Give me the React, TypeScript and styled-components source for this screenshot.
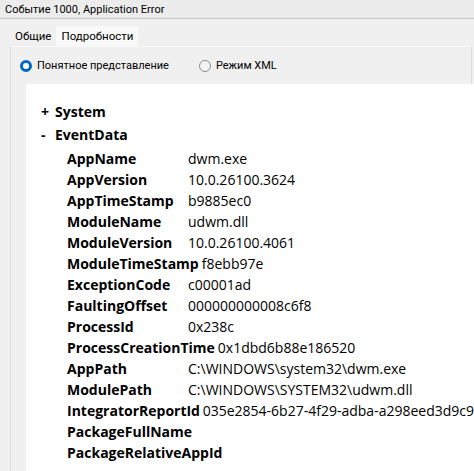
import styled, { createGlobalStyle } from "styled-components";

const GlobalStyle = createGlobalStyle`
  html, body {
    margin: 0;
    padding: 0;
    background: #f0f0f0;
    overflow: hidden;
  }
  * {
    box-sizing: border-box;
  }
`;

const Window = styled.div`
  width: 474px;
  height: 471px;
  overflow: hidden;
  display: flex;
  flex-direction: column;
  background: #f0f0f0;
  font-family: "Open Sans", "Noto Sans", sans-serif;
  color: #000;
`;

const TitleBar = styled.div`
  height: 19px;
  flex-shrink: 0;
  padding-left: 5px;
  display: flex;
  align-items: center;
  font-family: Roboto, "Open Sans", sans-serif;
  font-size: 11px;
  background: #ececec;
  border-bottom: 1px solid #c8c8c8;
  white-space: nowrap;
`;

const TabStrip = styled.div`
  height: 27px;
  flex-shrink: 0;
  display: flex;
  align-items: flex-end;
  padding-left: 10px;
`;

const Tab = styled.div<{ $active?: boolean }>`
  height: 20px;
  padding: 0 5px;
  display: flex;
  align-items: center;
  font-family: Roboto, "Open Sans", sans-serif;
  font-size: 11.5px;
  background: ${(p) => (p.$active ? "#f9f9f9" : "transparent")};
  white-space: nowrap;
`;

const Panel = styled.div`
  flex: 1;
  margin: 0 2px 0 10px;
  display: flex;
  flex-direction: column;
  border-left: 1px solid #dedede;
  border-right: 1px solid #dedede;
  border-top: 1px solid #f9f9f9;
  min-height: 0;
`;

const RadioRow = styled.div`
  height: 37px;
  flex-shrink: 0;
  display: flex;
  align-items: center;
  padding-left: 9px;
  gap: 30px;
`;

const RadioOption = styled.label`
  display: flex;
  align-items: center;
  gap: 5px;
  font-family: Roboto, "Open Sans", sans-serif;
  font-size: 11px;
  white-space: nowrap;
`;

const RadioDot = styled.span<{ $checked?: boolean }>`
  width: 12px;
  height: 12px;
  border-radius: 50%;
  flex-shrink: 0;
  background: ${(p) => (p.$checked ? "#fff" : "#f4f4f4")};
  border: ${(p) => (p.$checked ? "3.5px solid #0067c0" : "1px solid #8a8a8a")};
`;

const Content = styled.div`
  flex: 1;
  margin-left: 15px;
  margin-right: -3px;
  background: #fff;
  padding: 15px 0 0 14px;
  min-height: 0;
  overflow: hidden;
`;

const Node = styled.div<{ $tall?: boolean }>`
  display: flex;
  height: ${(p) => (p.$tall ? "24px" : "22px")};
  align-items: center;
  font-size: 14px;
  font-weight: 700;
  white-space: nowrap;
`;

const Toggle = styled.span`
  width: 15px;
  flex-shrink: 0;
  padding-left: 1px;
`;

const DataTable = styled.div`
  margin: 3px 0 0 27px;
  display: flex;
  flex-direction: column;
`;

const DataRow = styled.div`
  display: flex;
  height: 21px;
  align-items: center;
  white-space: nowrap;
`;

const Key = styled.span`
  min-width: 118px;
  font-size: 14px;
  font-weight: 700;
`;

const Value = styled.span`
  padding-left: 3px;
  font-size: 14px;
`;

const rows: [string, string][] = [
  ["AppName", "dwm.exe"],
  ["AppVersion", "10.0.26100.3624"],
  ["AppTimeStamp", "b9885ec0"],
  ["ModuleName", "udwm.dll"],
  ["ModuleVersion", "10.0.26100.4061"],
  ["ModuleTimeStamp", "f8ebb97e"],
  ["ExceptionCode", "c00001ad"],
  ["FaultingOffset", "000000000008c6f8"],
  ["ProcessId", "0x238c"],
  ["ProcessCreationTime", "0x1dbd6b88e186520"],
  ["AppPath", "C:\\WINDOWS\\system32\\dwm.exe"],
  ["ModulePath", "C:\\WINDOWS\\SYSTEM32\\udwm.dll"],
  ["IntegratorReportId", "035e2854-6b27-4f29-adba-a298eed3d9c9"],
  ["PackageFullName", ""],
  ["PackageRelativeAppId", ""],
];

export default function App() {
  return (
    <>
      <GlobalStyle />
      <Window>
        <TitleBar>Событие 1000, Application Error</TitleBar>
        <TabStrip>
          <Tab>Общие</Tab>
          <Tab $active>Подробности</Tab>
        </TabStrip>
        <Panel>
          <RadioRow>
            <RadioOption>
              <RadioDot $checked />
              Понятное представление
            </RadioOption>
            <RadioOption>
              <RadioDot />
              Режим XML
            </RadioOption>
          </RadioRow>
          <Content>
            <Node $tall>
              <Toggle>+</Toggle>
              System
            </Node>
            <Node>
              <Toggle>-</Toggle>
              EventData
            </Node>
            <DataTable>
              {rows.map(([k, v]) => (
                <DataRow key={k}>
                  <Key>{k}</Key>
                  <Value>{v}</Value>
                </DataRow>
              ))}
            </DataTable>
          </Content>
        </Panel>
      </Window>
    </>
  );
}
